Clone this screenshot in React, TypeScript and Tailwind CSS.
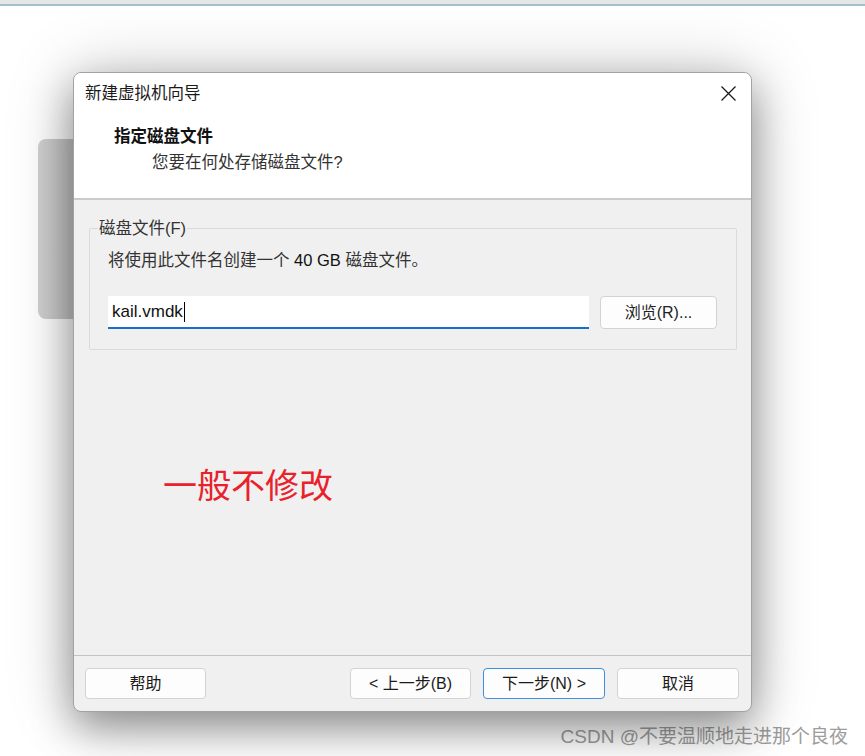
const cjk = '"Liberation Sans", "Noto Sans CJK SC", sans-serif';

function WizardButton({ label, primary, width }: { label: string; primary?: boolean; width: string }) {
    return (
        <button
            className={`h-[31px] ${width} rounded-[4px] bg-[#fdfdfd] text-[16px] text-[#1a1a1a] ${primary
                ? 'border border-[#3d8fe0]'
                : 'border border-[#d3d3d3]'
                }`}
        >
            {label}
        </button>
    );
}

export default function App() {
    return (
        <div className="relative h-[756px] w-[865px] overflow-hidden bg-white" style={{ fontFamily: cjk }}>
            <div className="h-[6px] border-b-2 border-[#a3c0cf] bg-[#e6e6e6]" />

            <div className="flex pt-[66px]">
                {/* window behind the wizard */}
                <div className="ml-[38px] mt-[67px] h-[180px] w-[36px] rounded-l-[8px] bg-gradient-to-r from-[#d2d2d2] to-[#c6c6c6]" />

                <div className="relative z-10 -ml-[1px] flex h-[640px] w-[679px] flex-col overflow-hidden rounded-[8px] border border-[#a2a2a2] bg-[#f0f0f0] shadow-[0_16px_40px_rgba(0,0,0,0.38),0_0_70px_rgba(0,0,0,0.2)]">
                    <div className="h-[127px] border-b-2 border-[#cbcbcb] bg-white">
                        <div className="flex h-[40px] items-center justify-between pl-[11px] pr-[15px]">
                            <span className="text-[16.5px] text-[#1a1a1a]">新建虚拟机向导</span>
                            <svg width="15" height="15" viewBox="0 0 15 15" className="text-[#1a1a1a]">
                                <path d="M0.5 0.5 L14.5 14.5 M14.5 0.5 L0.5 14.5" stroke="currentColor" strokeWidth="1.3" fill="none" />
                            </svg>
                        </div>
                        <div className="mt-[12px] pl-[40px] text-[16.5px] font-bold leading-[22px] text-[#111]">指定磁盘文件</div>
                        <div className="mt-[4px] pl-[78px] text-[16.5px] leading-[22px] text-[#333]">您要在何处存储磁盘文件?</div>
                    </div>

                    <div className="flex-1 pt-[17px]">
                        <fieldset className="mx-[15px] rounded-[2px] border border-[#dadada] pb-[20px] pl-[18px] pr-[19px]">
                            <legend className="-ml-[10px] px-[1px] text-[16.5px] leading-[22px] text-[#333]">磁盘文件(F)</legend>
                            <div className="mt-[10px] text-[16.5px] leading-[22px] text-[#333]">
                                将使用此文件名创建一个 <span className="text-[#111]">40 GB</span> 磁盘文件。
                            </div>
                            <div className="mt-[25px] flex items-center gap-[11px]">
                                <div className="flex h-[33px] w-[481px] items-center border-b-2 border-[#1a6fc9] bg-white pl-[4px]">
                                    <span className="text-[17px] text-[#111]">kail.vmdk</span>
                                    <span className="ml-[1px] h-[20px] w-[1px] bg-black" />
                                </div>
                                <button className="h-[33px] w-[117px] rounded-[4px] border border-[#d3d3d3] bg-[#fdfdfd] text-[16px] text-[#222]">
                                    浏览(R)...
                                </button>
                            </div>
                        </fieldset>

                        <div className="mt-[116px] pl-[89px] text-[34px] leading-[40px] text-[#e8212b]">一般不修改</div>
                    </div>

                    <div className="flex h-[56px] items-start border-t border-[#c3c3c3] pl-[11px] pr-[12px] pt-[12px]">
                        <WizardButton label="帮助" width="w-[121px]" />
                        <div className="ml-auto flex gap-[12px]">
                            <WizardButton label="< 上一步(B)" width="w-[121px]" />
                            <WizardButton label="下一步(N) >" width="w-[122px]" primary />
                            <WizardButton label="取消" width="w-[122px]" />
                        </div>
                    </div>
                </div>
            </div>

            <div className="absolute bottom-[7px] right-[17px] text-[19px] leading-[24px] text-[#9d9d9d] [text-shadow:0_0_2px_#fff,0_0_1px_#fff]">
                CSDN @不要温顺地走进那个良夜
            </div>
        </div>
    );
}
